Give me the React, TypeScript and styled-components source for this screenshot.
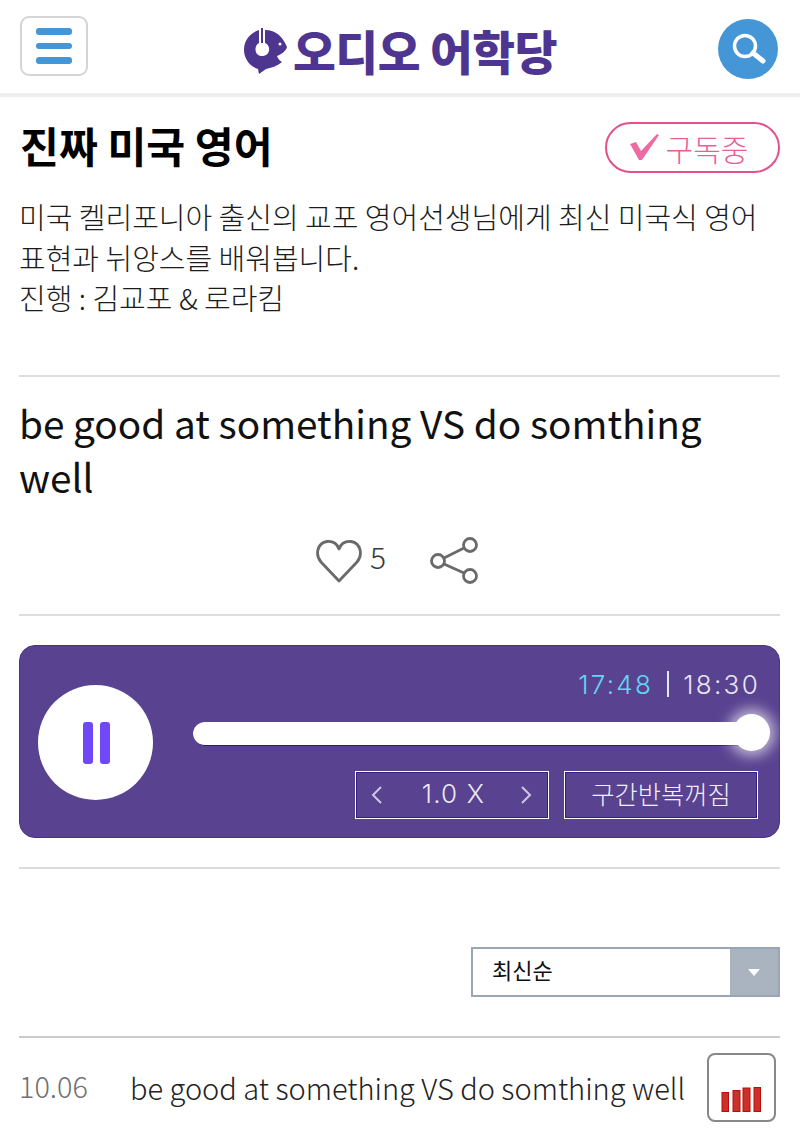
import React, {FC} from 'react';
import styled, {createGlobalStyle} from 'styled-components';

const GlobalStyle = createGlobalStyle`
  html, body {
    margin: 0;
    padding: 0;
    background: #fff;
    font-family: "Noto Sans CJK KR", "Noto Sans", sans-serif;
    color: #222;
  }
  * { box-sizing: border-box; }
`

const App: FC = () => {
    return (
        <Page>
            <GlobalStyle/>
            <Header>
                <MenuButton aria-label="menu"><MenuBar/><MenuBar/><MenuBar/></MenuButton>
                <Logo>
                    <LogoMark/>
                    <LogoText>오디오 어학당</LogoText>
                </Logo>
                <SearchButton aria-label="search">
                    <svg width="40" height="40" viewBox="0 0 40 40" fill="none">
                        <circle cx="17" cy="17" r="10.500" stroke="#fff" strokeWidth="3.500"/>
                        <path d="M25 24 L35 32" stroke="#fff" strokeWidth="5" strokeLinecap="round"/>
                    </svg>
                </SearchButton>
            </Header>

            <Content>
                <TitleRow>
                    <Title>진짜 미국 영어</Title>
                    <SubscribeButton>
                        <svg width="30" height="27" viewBox="0 0 30 27">
                            <path d="M0 10 L6 8 L11 17 L27 0 L29 1 L12 26 L9 26 Z" fill="#ee6aa2"/>
                        </svg>
                        구독중
                    </SubscribeButton>
                </TitleRow>
                <Description>
                    미국 켈리포니아 출신의 교포 영어선생님에게 최신 미국식 영어 표현과 뉘앙스를 배워봅니다.<br/>
                    진행 : 김교포 &amp; 로라킴
                </Description>

                <EpisodeBlock>
                    <EpisodeTitle>be good at something VS do somthing well</EpisodeTitle>
                    <Actions>
                        <LikeGroup>
                            <svg width="48" height="46" viewBox="0 0 48 46" fill="none">
                                <path d="M24 43 L6 24 C0 17 2 5 12 3.500 C17.500 3 22 5.500 24 11 C26 5.500 30.500 3 36 3.500 C46 5 48 17 42 24 Z" stroke="#6a6a6a" strokeWidth="2.800" strokeLinejoin="round"/>
                            </svg>
                            <LikeCount>5</LikeCount>
                        </LikeGroup>
                        <svg width="50" height="48" viewBox="0 0 50 48" fill="none" stroke="#6a6a6a" strokeWidth="2.800">
                            <circle cx="9" cy="24" r="6.500"/>
                            <circle cx="41" cy="8" r="6.500"/>
                            <circle cx="41" cy="39" r="6.500"/>
                            <path d="M15 21 L35 11 M15 27 L35 36"/>
                        </svg>
                    </Actions>
                </EpisodeBlock>

                <PlayerPanel>
                    <PauseCircle>
                        <PauseBar/><PauseBar/>
                    </PauseCircle>
                    <PlayerMain>
                        <TimeRow>
                            <CurrentTime>17:48</CurrentTime>
                            <TimeDivider/>
                            <TotalTime>18:30</TotalTime>
                        </TimeRow>
                        <Track>
                            <Knob/>
                        </Track>
                        <ControlRow>
                            <SpeedBox>
                                <Chevron viewBox="0 0 14 20"><path d="M11 2 L3 10 L11 18"/></Chevron>
                                <SpeedValue>1.0 X</SpeedValue>
                                <Chevron viewBox="0 0 14 20"><path d="M3 2 L11 10 L3 18"/></Chevron>
                            </SpeedBox>
                            <RepeatBox>구간반복꺼짐</RepeatBox>
                        </ControlRow>
                    </PlayerMain>
                </PlayerPanel>

                <SortRow>
                    <SortSelect>
                        <SortLabel>최신순</SortLabel>
                        <SortArrow><ArrowGlyph/></SortArrow>
                    </SortSelect>
                </SortRow>

                <ListRow>
                    <ListDate>10.06</ListDate>
                    <ListTitle>be good at something VS do somthing well</ListTitle>
                    <BarsButton>
                        <svg width="42" height="26" viewBox="0 0 42 26" fill="#cb3128" stroke="#bb0d0d" strokeWidth="1">
                            <rect x="1" y="6.500" width="6.500" height="19"/>
                            <rect x="12" y="4.500" width="7" height="21"/>
                            <rect x="22" y="2" width="7" height="23.500"/>
                            <rect x="33" y="1.500" width="6.500" height="24"/>
                        </svg>
                    </BarsButton>
                </ListRow>
            </Content>
        </Page>
    );
};

const LogoMark: FC = () => (
    <svg width="44" height="50" viewBox="0 0 44 50">
        <path fill="#4e3590" d="M15 5 L21 5 C32 5 39 12 43 22 C42 26 38 29 33 31 C34 34 36 36 38 37 C33 41 27 43 22 44 L15 49 L14 44 C5 41 0 33 0 25 C0 15 6 8 15 5 Z"/>
        <path fill="#fff" d="M15 4 C15 0 21 0 21 4 L21 18 C27 20 27 31 18 31 C10 31 10 20 15 18 Z"/>
        <path fill="#4e3590" d="M17 3 L19 3 L19 18 L17 18 Z"/>
        <circle cx="36" cy="19" r="1.500" fill="#fff"/>
    </svg>
)

export default App;

const Page = styled.div`
  width: 800px;
  height: 1137px;
  overflow: hidden;
  background: #fff;
`
const Header = styled.header`
  height: 97px;
  padding: 16px 22px 0 20px;
  display: flex;
  align-items: flex-start;
  justify-content: space-between;
  border-bottom: 4px solid #eeeeee;
`
const MenuButton = styled.button`
  width: 68px;
  height: 60px;
  padding: 0;
  border: 2px solid #d4d4d4;
  border-radius: 9px;
  background: #fff;
  display: flex;
  flex-direction: column;
  align-items: center;
  justify-content: center;
  gap: 8px;
`
const MenuBar = styled.span`
  width: 36px;
  height: 6.500px;
  border-radius: 3px;
  background: #4596d6;
`
const Logo = styled.div`
  display: flex;
  align-items: center;
  gap: 5px;
  margin: 9px 5px 0 0;
`
const LogoText = styled.span`
  font-size: 46.500px;
  line-height: 50px;
  font-weight: 900;
  color: #4e3590;
  letter-spacing: -0.500px;
  white-space: nowrap;
`
const SearchButton = styled.button`
  width: 60px;
  height: 60px;
  margin-top: 3px;
  padding: 0;
  border: 0;
  border-radius: 50%;
  background: #4596d6;
  display: flex;
  align-items: center;
  justify-content: center;
`
const Content = styled.main`
  padding: 0 20px 0 19px;
`
const TitleRow = styled.div`
  display: flex;
  align-items: flex-start;
  justify-content: space-between;
`
const Title = styled.h1`
  margin: 19px 0 0 1px;
  font-size: 42.300px;
  line-height: 58px;
  font-weight: 700;
  color: #000;
`
const SubscribeButton = styled.div`
  width: 175px;
  height: 51px;
  margin-top: 25px;
  border: 2px solid #e4508c;
  border-radius: 26px;
  display: flex;
  align-items: center;
  justify-content: center;
  gap: 6px;
  color: #e85f98;
  font-size: 30px;
  font-weight: 300;
  padding-right: 7px;
`
const Description = styled.p`
  margin: 22px 0 0;
  height: 181px;
  font-size: 29px;
  line-height: 40.500px;
  font-weight: 300;
  color: #1c1c1c;
  border-bottom: 2px solid #dddddd;
`
const EpisodeBlock = styled.section`
  border-bottom: 2px solid #dddddd;
  height: 239px;
  padding: 18px 0 0;
`
const EpisodeTitle = styled.h2`
  margin: 0;
  font-size: 38.750px;
  line-height: 54px;
  font-weight: 400;
  color: #111;
`
const Actions = styled.div`
  display: flex;
  align-items: center;
  justify-content: center;
  gap: 43px;
  margin-top: 34px;
  padding-right: 5px;
`
const LikeGroup = styled.div`
  display: flex;
  align-items: center;
  gap: 7px;
`
const LikeCount = styled.span`
  margin-bottom: 10px;
  font-size: 30px;
  line-height: 36px;
  color: #3a3a3a;
  font-weight: 300;
`
const PlayerPanel = styled.section`
  margin-top: 29px;
  height: 193px;
  border-radius: 16px;
  background: #594290;
  border: 1px solid #4a3288;
  display: flex;
  padding: 39px 10px 0 18px;
  gap: 40px;
`
const PauseCircle = styled.div`
  width: 115px;
  height: 115px;
  border-radius: 50%;
  background: #fff;
  display: flex;
  align-items: center;
  justify-content: center;
  gap: 7px;
  padding-left: 2px;
  flex-shrink: 0;
`
const PauseBar = styled.span`
  width: 10px;
  height: 42px;
  border-radius: 3px;
  background: #7048f8;
`
const PlayerMain = styled.div`
  flex: 1;
  display: flex;
  flex-direction: column;
  margin-top: -39px;
`
const TimeRow = styled.div`
  height: 76px;
  padding: 25px 9px 0 0;
  display: flex;
  justify-content: flex-end;
  align-items: flex-start;
  gap: 14px;
  font-family: Inter, sans-serif;
  font-size: 26px;
  line-height: 28px;
  letter-spacing: 2.300px;
  font-weight: 300;
`
const CurrentTime = styled.span`
  color: #62d6f2;
`
const TimeDivider = styled.span`
  width: 2px;
  height: 26px;
  background: #e8e6f0;
`
const TotalTime = styled.span`
  color: #e8e6f0;
`
const Track = styled.div`
  position: relative;
  height: 24px;
  border-radius: 12px;
  background: #fff;
  border-bottom: 1px solid #2a1a80;
`
const Knob = styled.span`
  position: absolute;
  right: -1px;
  top: -8px;
  width: 37px;
  height: 37px;
  border-radius: 50%;
  background: #fff;
  box-shadow: 0 0 14px 5px rgba(255, 255, 255, 0.65);
`
const ControlRow = styled.div`
  display: flex;
  justify-content: flex-end;
  gap: 15px;
  margin-top: 25px;
  padding-right: 11px;
`
const SpeedBox = styled.div`
  width: 194px;
  height: 48px;
  border: 1px solid #fff;
  outline: 1px solid #31207e;
  outline-offset: -2px;
  display: flex;
  align-items: center;
  justify-content: space-between;
  padding: 0 15px 0 14px;
`
const SpeedValue = styled.span`
  margin: 0 0 4px 4px;
  font-family: Inter, sans-serif;
  color: #ece9f4;
  font-size: 26px;
  font-weight: 300;
  letter-spacing: 1.200px;
`
const Chevron = styled.svg`
  width: 14px;
  height: 20px;
  fill: none;
  stroke: #cfc6e2;
  stroke-width: 2;
`
const RepeatBox = styled.div`
  width: 194px;
  height: 48px;
  border: 1px solid #fff;
  outline: 1px solid #31207e;
  outline-offset: -2px;
  display: flex;
  align-items: center;
  justify-content: center;
  padding-bottom: 5px;
  color: #f1eff7;
  font-size: 25.300px;
  font-weight: 300;
`
const SortRow = styled.div`
  border-top: 2px solid #dddddd;
  margin-top: 29px;
  height: 171px;
  padding-top: 78px;
  display: flex;
  justify-content: flex-end;
  border-bottom: 2px solid #cccccc;
`
const SortSelect = styled.div`
  width: 309px;
  height: 50px;
  display: flex;
  border: 2px solid #9aa6b4;
`
const SortLabel = styled.span`
  flex: 1;
  padding-left: 19px;
  font-size: 22px;
  line-height: 40px;
  color: #111;
`
const SortArrow = styled.span`
  width: 48px;
  background: #aab4c0;
  display: flex;
  align-items: center;
  justify-content: center;
`
const ArrowGlyph = styled.span`
  width: 0;
  height: 0;
  border-left: 6px solid transparent;
  border-right: 6px solid transparent;
  border-top: 7px solid #fff;
`
const ListRow = styled.div`
  display: flex;
  align-items: center;
  height: 98px;
  padding-right: 4px;
`
const ListDate = styled.span`
  width: 111px;
  margin-bottom: 3px;
  font-size: 28.800px;
  font-weight: 300;
  color: #707070;
`
const ListTitle = styled.span`
  flex: 1;
  font-size: 29px;
  font-weight: 300;
  color: #222;
  white-space: nowrap;
`
const BarsButton = styled.div`
  width: 69px;
  height: 69px;
  border: 2px solid #888;
  border-radius: 8px;
  display: flex;
  align-items: flex-end;
  justify-content: center;
  padding-bottom: 8px;
`
